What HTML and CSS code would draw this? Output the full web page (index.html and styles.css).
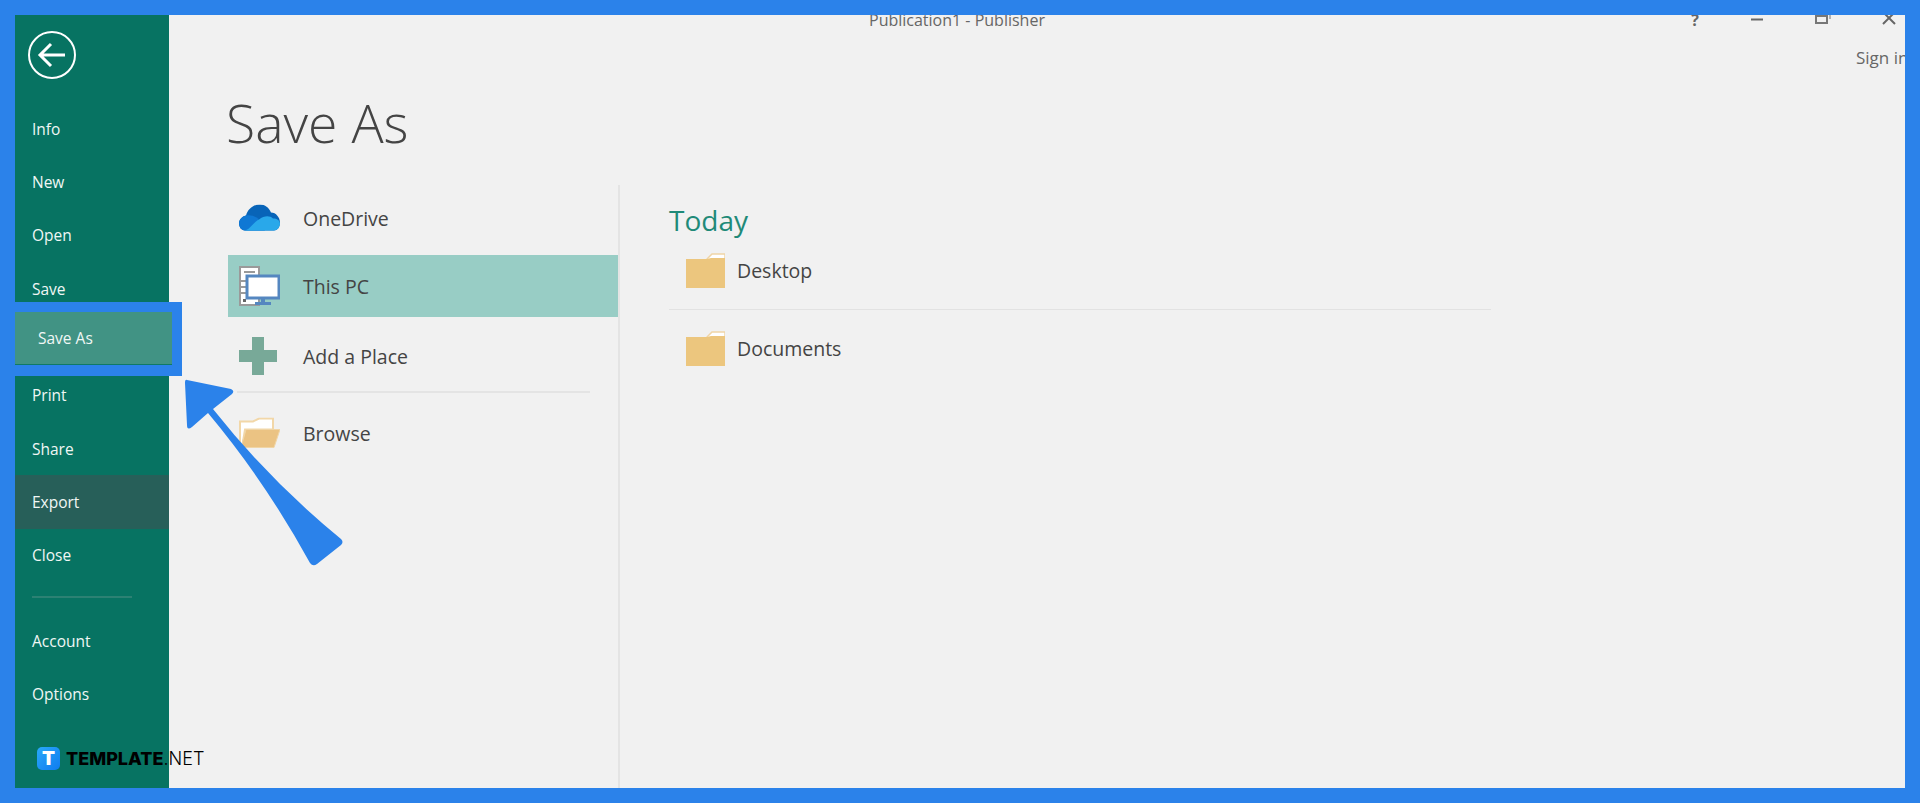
FILE: index.html
```html
<!DOCTYPE html>
<html lang="en">
<head>
<meta charset="utf-8">
<title>Save As - Publisher</title>
<link rel="stylesheet" href="styles.css">
</head>
<body>
<div class="window">
  <aside class="sidebar">
    <div class="back">
      <svg width="50" height="50" viewBox="0 0 50 50" fill="none" stroke="#fff">
        <circle cx="24" cy="25" r="23" stroke-width="2"/>
        <path d="M12 25H37M23 14L12 25L23 36" stroke-width="3"/>
      </svg>
    </div>
    <nav class="nav">
      <div class="item">Info</div>
      <div class="item">New</div>
      <div class="item">Open</div>
      <div class="item">Save</div>
      <div class="item item-saveas"><span class="saveas-inner">Save As</span></div>
      <div class="item">Print</div>
      <div class="item">Share</div>
      <div class="item item-hover">Export</div>
      <div class="item">Close</div>
      <div class="nav-sep"></div>
      <div class="item">Account</div>
      <div class="item">Options</div>
    </nav>
  </aside>

  <main class="main">
    <div class="titlebar">
      <span class="doc-title">Publication1 - Publisher</span>
      <div class="controls">
        <span class="ctl ctl-help">?</span>
        <svg class="ctl" width="14" height="14" viewBox="0 0 14 14"><path d="M1 6.5H13" stroke="#666" stroke-width="2"/></svg>
        <svg class="ctl" width="16" height="16" viewBox="0 0 16 16" fill="none" stroke="#777" stroke-width="2"><path d="M1 4H12V11H1Z"/><path d="M4 1H15V7" stroke-width="1"/></svg>
        <svg class="ctl" width="14" height="14" viewBox="0 0 14 14" fill="none" stroke="#666" stroke-width="2"><path d="M1 -1L13 11M13 -1L1 11"/></svg>
      </div>
    </div>
    <div class="signin">Sign in</div>
    <h1 class="page-title">Save As</h1>
    <div class="content">
      <section class="places">
        <div class="place place-first">
          <svg class="place-icon" width="41" height="27" viewBox="0 0 41 27">
            <path d="M6 26C2 26 0 22 0 19C0 15 3 12 7 11C9 4 15 0 21 0C26 0 30 3 32 8C37 8 41 13 41 18C41 23 38 26 35 26Z" fill="#0864b8"/>
            <path d="M0 19C0 15 3 12 7 11C12 10 16 12 19 14L26 26H6C2 26 0 22 0 19Z" fill="#0f78d4"/>
            <path d="M6 26C12 24 14 18 20 15C25 11 31 11 34 14C38 14 41 16 41 19C41 23 38 26 35 26Z" fill="#29a8ea"/>
          </svg>
          <span>OneDrive</span>
        </div>
        <div class="place place-active">
          <svg class="place-icon" width="41" height="40" viewBox="0 0 41 40">
            <rect x="1" y="1" width="19" height="38" fill="#fff" stroke="#9a9a9a" stroke-width="2"/>
            <path d="M5 6H16M2 15H7M2 21H7M2 27H7" stroke="#9a9a9a" stroke-width="2"/>
            <rect x="4" y="33" width="3" height="3" fill="#666"/>
            <rect x="8" y="10" width="32" height="22" fill="#fff" stroke="#5587c0" stroke-width="3"/>
            <path d="M22 32H26V36H32V39H16V36H22Z" fill="#5587c0"/>
          </svg>
          <span>This PC</span>
        </div>
        <div class="place place-add">
          <svg class="place-icon" width="38" height="38" viewBox="0 0 38 38">
            <path d="M13 0H25V13H38V25H25V38H13V25H0V13H13Z" fill="#78a998"/>
          </svg>
          <span>Add a Place</span>
        </div>
        <div class="places-sep"></div>
        <div class="place">
          <svg class="place-icon" width="41" height="31" viewBox="0 0 41 31">
            <path d="M1 4H14L20 1H34V12H6L3 30H1Z" fill="#fff" stroke="#f2d7a8" stroke-width="2"/>
            <path d="M7 12H41L35 30H2Z" fill="#ebc383" stroke="#f0d5a6"/>
          </svg>
          <span>Browse</span>
        </div>
      </section>
      <section class="recent">
        <h2 class="recent-title">Today</h2>
        <div class="folder-row">
          <svg class="folder" width="39" height="35" viewBox="0 0 39 35">
            <path d="M21 6L26 1H39V10H21Z" fill="#fff" stroke="#f0d5a6" stroke-width="1.5"/>
            <path d="M0 6H21L25 5H39V35H0Z" fill="#ecc67e"/>
          </svg>
          <span>Desktop</span>
        </div>
        <div class="recent-sep"></div>
        <div class="folder-row">
          <svg class="folder" width="39" height="35" viewBox="0 0 39 35">
            <path d="M21 6L26 1H39V10H21Z" fill="#fff" stroke="#f0d5a6" stroke-width="1.5"/>
            <path d="M0 6H21L25 5H39V35H0Z" fill="#ecc67e"/>
          </svg>
          <span>Documents</span>
        </div>
      </section>
    </div>
  </main>

  <svg class="arrow" width="170" height="200" viewBox="0 0 170 200">
    <path d="M7 4L51 13Q55 15 52 18L33 33Q90 105 161 163Q164 166 161 169L137 188Q133 191 130 187Q85 105 28 37L12 51Q7 55 7 49L5 7Q5 3 7 4Z" fill="#2b82ea"/>
  </svg>

  <div class="brand">
    <span class="brand-mark">T</span>
    <span class="brand-name">TEMPLATE</span><span class="brand-net">.NET</span>
  </div>
</div>
</body>
</html>
```

FILE: styles.css
```css
* { box-sizing: border-box; }
html, body { margin: 0; height: 100%; }
body {
  background: #2b82ea;
  padding: 15px;
  overflow: hidden;
  font-family: "Open Sans", "Liberation Sans", sans-serif;
}
.window {
  position: relative;
  display: flex;
  height: 773px;
  background: #f1f1f1;
  overflow: hidden;
}

/* Sidebar */
.sidebar {
  flex: 0 0 154px;
  min-width: 0;
  width: 154px;
  background: #077362;
  color: #f0f7f5;
}
.back { padding: 15px 0 0 13px; height: 87px; }
.back svg { display: block; }
.nav { display: flex; flex-direction: column; }
.item {
  height: 53.4px;
  flex: none;
  display: flex;
  align-items: center;
  padding-left: 17px;
  font-size: 15.5px;
}
.item-hover { background: #275f59; }
.item-saveas {
  position: relative;
  z-index: 2;
  width: 167px;
  height: 74px;
  margin: -14px 0 -7px;
  padding: 10px 10px 11px 0;
  background: #2b82ea;
}
.saveas-inner {
  display: flex;
  align-items: center;
  width: 100%;
  height: 100%;
  padding: 0 0 0 23px;
  background: #419384;
  border-bottom: 1px solid #0f7a66;
}
.nav-sep {
  height: 2px;
  width: 100px;
  margin: 14px 0 16px 17px;
  background: #2c8173;
}

/* Main */
.main {
  flex: 1;
  min-width: 0;
  display: flex;
  flex-direction: column;
  color: #444;
}
.titlebar {
  display: flex;
  align-items: center;
  height: 14px;
  margin-top: -2px;
  padding-left: 700px;
  font-size: 16px;
  color: #666;
  flex: none;
}
.doc-title { white-space: nowrap; }
.controls {
  display: flex;
  align-items: center;
  margin-left: auto;
  gap: 51px;
  padding-right: 9px;
}
.ctl-help { font-weight: 700; color: #666; font-size: 16px; line-height: 14px; }
.signin {
  margin-top: 20px;
  height: 22px;
  line-height: 22px;
  padding-left: 1687px;
  font-size: 17px;
  color: #666;
  white-space: nowrap;
  overflow: hidden;
  flex: none;
}
.page-title {
  margin: 14px 0 0 57px;
  height: 80px;
  line-height: 80px;
  font-size: 53.5px;
  font-weight: 300;
  color: #444;
  flex: none;
}
.content { display: flex; flex: 1; min-height: 0; margin-top: 22px; }
.places {
  width: 451px;
  padding: 2px 0 0 59px;
  border-right: 2px solid #e4e4e4;
  flex: none;
}
.place {
  display: flex;
  align-items: center;
  position: relative;
  height: 62px;
  padding-left: 75px;
  font-size: 19.5px;
  color: #444;
}
.place-icon { position: absolute; left: 11px; top: 50%; transform: translateY(-50%); }
.place-first { margin-bottom: 6px; }
.place-active { background: #98cdc5; }
.place-add { margin-top: 8px; }
.places-sep {
  height: 2px;
  margin: 4px 28px 9px 9px;
  background: #e4e4e4;
}
.recent { padding: 14px 0 0 49px; width: 871px; }
.recent-title {
  margin: 0 0 7px;
  height: 43px;
  line-height: 43px;
  font-size: 28px;
  font-weight: 400;
  color: #1f8a78;
}
.folder-row {
  display: flex;
  align-items: center;
  gap: 12px;
  height: 43px;
  padding-left: 17px;
  font-size: 19.5px;
  color: #444;
}
.recent-sep { height: 1px; margin: 17px 0 17px; background: #e2e2e2; }

/* Annotation */
.arrow { position: absolute; left: 165px; top: 361px; z-index: 3; }

/* Watermark */
.brand {
  position: absolute;
  left: 22px;
  top: 732px;
  z-index: 4;
  display: flex;
  align-items: center;
  height: 23px;
  color: #000;
  white-space: nowrap;
}
.brand-mark {
  width: 23px;
  height: 23px;
  margin-right: 6px;
  border-radius: 5px;
  background: linear-gradient(135deg, #29a9f8, #0f7bf0);
  color: #fff;
  font: 900 19px/23px "Inter", "Liberation Sans", sans-serif;
  text-align: center;
}
.brand-name { font: 800 18px/23px "Inter", "Liberation Sans", sans-serif; }
.brand-net { font: 300 18px/23px "Inter", "Liberation Sans", sans-serif; }
```
